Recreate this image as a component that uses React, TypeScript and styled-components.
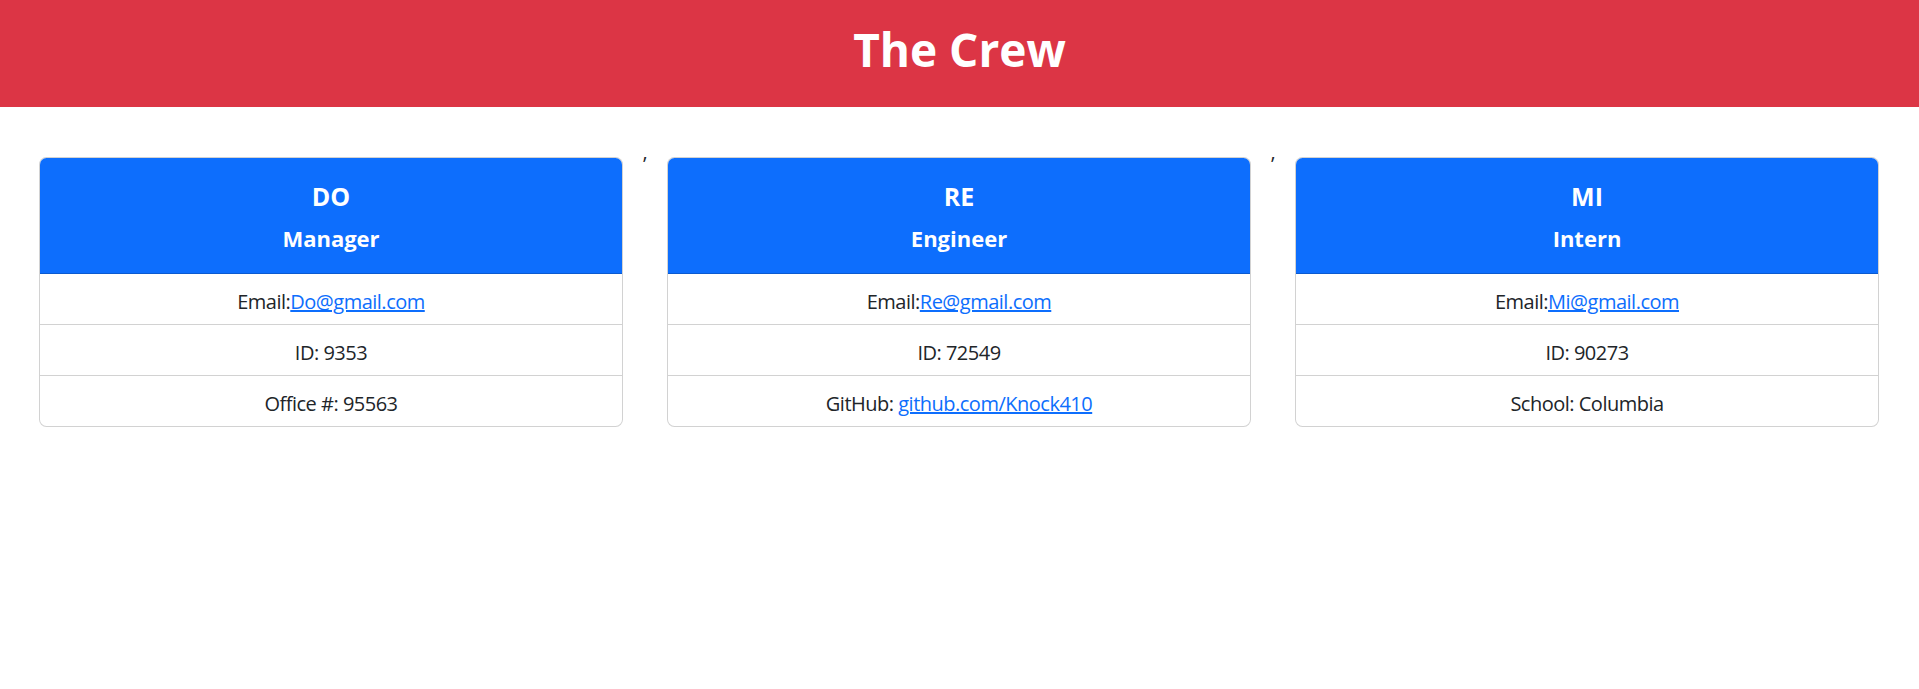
import styled, { createGlobalStyle } from 'styled-components';

const GlobalStyle = createGlobalStyle`
  * {
    box-sizing: border-box;
  }
  body {
    margin: 0;
    background: #fff;
    color: #212529;
    font-family: 'Open Sans', 'Noto Sans', sans-serif;
    font-size: 20px;
    line-height: 30px;
  }
`;

interface Member {
  name: string;
  role: string;
  email: string;
  id: number;
  label: string;
  value: string;
  link?: string;
}

const crew: Member[] = [
  { name: 'DO', role: 'Manager', email: 'Do@gmail.com', id: 9353, label: 'Office #:', value: '95563' },
  {
    name: 'RE',
    role: 'Engineer',
    email: 'Re@gmail.com',
    id: 72549,
    label: 'GitHub:',
    value: 'github.com/Knock410',
    link: 'https://github.com/Knock410',
  },
  { name: 'MI', role: 'Intern', email: 'Mi@gmail.com', id: 90273, label: 'School:', value: 'Columbia' },
];

export default function App() {
  return (
    <>
      <GlobalStyle />
      <Banner>
        <Title>The Crew</Title>
      </Banner>
      <CardRow>
        {crew.map((m, i) => (
          <Slot key={m.name}>
            {i > 0 && <Comma>,</Comma>}
            <Card>
              <CardHeader>
                <Name>{m.name}</Name>
                <Role>{m.role}</Role>
              </CardHeader>
              <List>
                <Item>
                  Email:<Link href={`mailto:${m.email}`}>{m.email}</Link>
                </Item>
                <Item>ID: {m.id}</Item>
                <Item>
                  {m.label}{' '}
                  {m.link ? <Link href={m.link}>{m.value}</Link> : m.value}
                </Item>
              </List>
            </Card>
          </Slot>
        ))}
      </CardRow>
    </>
  );
}

// keeps the comma and card as direct flex children of the row
const Slot = styled.div`
  display: contents;
`;

const Banner = styled.header`
  background-color: #dc3545;
  padding: 19px 0 28px;
  text-align: center;
`;

const Title = styled.h1`
  margin: 0;
  color: #fff;
  font-size: 46px;
  line-height: 60px;
  font-weight: 700;
`;

const CardRow = styled.main`
  display: flex;
  align-items: flex-start;
  justify-content: space-between;
  padding: 50px 40px 0 39px;
`;

const Comma = styled.span`
  font-size: 20px;
  line-height: 0;
  margin-top: -5px;
  color: #212529;
`;

const Card = styled.section`
  width: 584px;
  border: 1px solid rgba(0, 0, 0, 0.175);
  border-radius: 7.5px;
  overflow: hidden;
  background: #fff;
`;

const CardHeader = styled.div`
  background-color: #0d6efd;
  color: #fff;
  text-align: center;
  padding: 23px 20px 22px;
  border-bottom: 1px solid rgba(0, 0, 0, 0.175);
`;

const Name = styled.h2`
  margin: 0 0 14px;
  font-size: 25px;
  line-height: 30px;
  font-weight: 700;
`;

const Role = styled.h3`
  margin: 0;
  font-size: 22px;
  line-height: 26.4px;
  font-weight: 700;
`;

const List = styled.ul`
  list-style: none;
  margin: 0;
  padding: 0;
`;

const Item = styled.li`
  padding: 13px 20px 7px;
  text-align: center;
  letter-spacing: -0.5px;
  border-bottom: 1px solid rgba(0, 0, 0, 0.175);

  &:last-child {
    border-bottom: 0;
  }
`;

const Link = styled.a`
  color: #0d6efd;
  text-decoration: underline;
`;
